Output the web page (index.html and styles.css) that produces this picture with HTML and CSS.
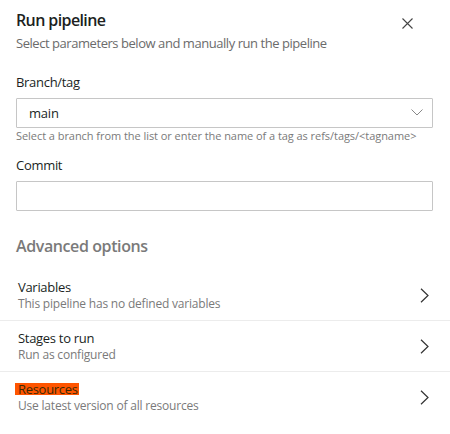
FILE: index.html
```html
<!DOCTYPE html>
<html lang="en">
<head>
<meta charset="utf-8">
<title>Run pipeline</title>
<link rel="stylesheet" href="styles.css">
</head>
<body>
<div class="panel">
  <div class="form">
    <div class="header">
      <h1 class="title">Run pipeline</h1>
      <button class="close" aria-label="Close">
        <svg width="11" height="11" viewBox="0 0 11 11"><path d="M0.5 0.5L10.5 10.5M10.5 0.5L0.5 10.5" stroke="#444" stroke-width="1.1" fill="none"/></svg>
      </button>
    </div>
    <p class="subtitle">Select parameters below and manually run the pipeline</p>

    <label class="label label-branch">Branch/tag</label>
    <div class="field select">
      <span class="value">main</span>
      <svg class="caret" width="12" height="7" viewBox="0 0 12 7"><path d="M0.5 0.5L6 6L11.5 0.5" stroke="#888" stroke-width="1" fill="none"/></svg>
    </div>
    <p class="helper">Select a branch from the list or enter the name of a tag as refs/tags/&lt;tagname&gt;</p>

    <label class="label label-commit">Commit</label>
    <div class="field input"></div>

    <h2 class="section">Advanced options</h2>
  </div>

  <ul class="options">
    <li class="option">
      <div class="option-text">
        <div class="option-title">Variables</div>
        <div class="option-sub">This pipeline has no defined variables</div>
      </div>
      <svg class="chev" width="9" height="15" viewBox="0 0 9 15"><path d="M1 0.7L8 7.5L1 14.3" stroke="#333" stroke-width="1.2" fill="none"/></svg>
    </li>
    <li class="option">
      <div class="option-text">
        <div class="option-title">Stages to run</div>
        <div class="option-sub">Run as configured</div>
      </div>
      <svg class="chev" width="9" height="15" viewBox="0 0 9 15"><path d="M1 0.7L8 7.5L1 14.3" stroke="#333" stroke-width="1.2" fill="none"/></svg>
    </li>
    <li class="option">
      <div class="option-text">
        <div class="option-title"><span class="mark">Resources</span></div>
        <div class="option-sub">Use latest version of all resources</div>
      </div>
      <svg class="chev" width="9" height="15" viewBox="0 0 9 15"><path d="M1 0.7L8 7.5L1 14.3" stroke="#333" stroke-width="1.2" fill="none"/></svg>
    </li>
  </ul>
</div>
</body>
</html>
```
FILE: styles.css
```css
* { box-sizing: border-box; }
html, body { margin: 0; padding: 0; background: #fff; }
body {
  font-family: "Open Sans", "Noto Sans", sans-serif;
  color: #201f1e;
  width: 450px;
}
.form { padding: 8px 17px 0 16px; }
.header { display: flex; align-items: flex-start; justify-content: space-between; }
.title {
  margin: 0;
  font-size: 16px;
  line-height: 24px;
  font-weight: 600;
  letter-spacing: -0.6px;
}
.close {
  border: 0; background: none; padding: 0;
  margin: 10px 20px 0 0;
  width: 11px; height: 11px;
  display: flex;
}
.subtitle {
  margin: 2px 0 0;
  font-size: 13px;
  line-height: 18px;
  color: #6b6b6b;
  letter-spacing: -0.45px;
}
.label {
  display: block;
  font-size: 13px;
  line-height: 18px;
  letter-spacing: -0.3px;
}
.label-branch { margin-top: 21px; }
.label-commit { margin-top: 13px; }
.field {
  margin-top: 7px;
  height: 30px;
  border: 1px solid #c6c6c6;
  border-radius: 1px;
  display: flex;
  align-items: center;
}
.select { padding: 0 9px 0 12px; justify-content: space-between; }
.value { font-size: 13px; line-height: 28px; letter-spacing: -0.2px; }
.caret { margin-top: -2px; }
.helper {
  margin: 0;
  font-size: 11px;
  line-height: 15px;
  color: #7a7a7a;
  letter-spacing: -0.05px;
}
.section {
  margin: 24px 0 0;
  font-size: 16px;
  line-height: 22px;
  font-weight: 600;
  color: #7a7a7a;
  letter-spacing: -0.4px;
}
.options { list-style: none; margin: 13px 0 0; padding: 0; }
.option {
  display: flex;
  align-items: center;
  justify-content: space-between;
  padding: 8px 21px 8px 18px;
}
.option + .option { border-top: 1px solid #ececec; }
.option-title { font-size: 13px; line-height: 18px; letter-spacing: -0.3px; }
.option-sub { font-size: 12px; line-height: 16px; color: #7a7a7a; letter-spacing: -0.2px; }
.mark {
  background: linear-gradient(#ff5500, #ff5500) no-repeat 0 3px / 100% 12px;
  color: #3b2a05;
  padding: 0 1px 0 3px;
  margin-left: -3px;
}
```
